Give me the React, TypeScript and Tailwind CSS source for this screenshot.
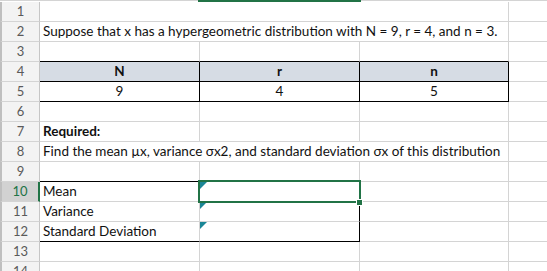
import React from "react";

const R = { g: "border-r border-r-[#d4d4d4]", k: "border-r border-r-black", n: "" };
const B = { g: "border-b border-b-[#d4d4d4]", k: "border-b border-b-black" };

type CellProps = {
  w: string;
  r?: "g" | "k" | "n";
  b?: "g" | "k";
  cls?: string;
  children?: React.ReactNode;
};

function Cell({ w, r = "g", b = "g", cls = "", children }: CellProps) {
  return (
    <div
      className={`relative flex h-full shrink-0 items-end whitespace-nowrap px-[3px] pb-[2px] leading-[16px] ${w} ${R[r]} ${B[b]} ${cls}`}
    >
      {children}
    </div>
  );
}

function Row({ n, active, children }: { n: number; active?: boolean; children: React.ReactNode }) {
  return (
    <div className="flex h-[20px]">
      <div
        className={`flex h-full w-[40px] shrink-0 items-end justify-center border-b border-l-2 border-b-[#d4d4d4] border-l-[#bfbfbf] pb-[2px] text-[13px] leading-[16px] ${
          active
            ? "border-r-2 border-r-[#217346] bg-[#d2d2d2] text-[#217346]"
            : "border-r border-r-[#c6c6c6] bg-[#f3f3f3] text-[#5a5a5a]"
        }`}
      >
        {n}
      </div>
      {children}
    </div>
  );
}

function Flag() {
  return (
    <svg className="absolute left-0 top-0" width="7" height="7" viewBox="0 0 7 7">
      <polygon points="0,0 7,0 0,7" fill="#1b8696" />
    </svg>
  );
}

const A = "w-[160px]";
const Bc = "w-[160px]";
const C = "w-[149px]";
const AC = "w-[469px]";
const D = "flex-1";

export default function App() {
  return (
    <div className="h-[271px] w-[547px] overflow-hidden bg-white text-[13.5px] text-[#111] [font-family:Lato,'Liberation_Sans',sans-serif]">
      <div className="flex h-[2px]">
        <div className="w-[198px] border-t border-t-[#d4d4d4]" />
        <div className="h-[2px] w-[163px] bg-[#217346]" />
        <div className="flex-1 border-t border-t-[#d4d4d4]" />
      </div>

      <Row n={1}>
        <Cell w={AC} />
        <Cell w={D} r="n" />
      </Row>
      <Row n={2}>
        <Cell w={AC}>Suppose that x has a hypergeometric distribution with N = 9, r = 4, and n = 3.</Cell>
        <Cell w={D} r="n" />
      </Row>
      <Row n={3}>
        <Cell w={A} b="k" />
        <Cell w={Bc} b="k" />
        <Cell w={C} b="k" />
        <Cell w={D} r="n" />
      </Row>
      <Row n={4}>
        <Cell w={A} r="k" b="k" cls="justify-center bg-[#d6dce4] font-bold">N</Cell>
        <Cell w={Bc} r="k" b="k" cls="justify-center bg-[#d6dce4] font-bold">r</Cell>
        <Cell w={C} r="k" b="k" cls="justify-center bg-[#d6dce4] font-bold">n</Cell>
        <Cell w={D} r="n" />
      </Row>
      <Row n={5}>
        <Cell w={A} r="k" b="k" cls="justify-center">9</Cell>
        <Cell w={Bc} r="k" b="k" cls="justify-center">4</Cell>
        <Cell w={C} r="k" b="k" cls="justify-center">5</Cell>
        <Cell w={D} r="n" />
      </Row>
      <Row n={6}>
        <Cell w={A} />
        <Cell w={Bc} />
        <Cell w={C} />
        <Cell w={D} r="n" />
      </Row>
      <Row n={7}>
        <Cell w={A} cls="font-bold">Required:</Cell>
        <Cell w={Bc} />
        <Cell w={C} />
        <Cell w={D} r="n" />
      </Row>
      <Row n={8}>
        <Cell w={AC}>Find the mean µx, variance σx2, and standard deviation σx of this distribution</Cell>
        <Cell w={D} r="n" />
      </Row>
      <Row n={9}>
        <Cell w={A} b="k" />
        <Cell w={Bc} b="k" />
        <Cell w={C} />
        <Cell w={D} r="n" />
      </Row>
      <Row n={10} active>
        <Cell w={A}>Mean</Cell>
        <Cell w={Bc} r="k">
          <div className="absolute left-[-2px] top-[-2px] z-10 h-[23px] w-[163px] border-2 border-[#217346]" />
          <div className="absolute left-[156px] top-[17px] z-20 h-[7px] w-[7px] border border-white bg-[#217346]" />
          <Flag />
        </Cell>
        <Cell w={C} />
        <Cell w={D} r="n" />
      </Row>
      <Row n={11}>
        <Cell w={A}>Variance</Cell>
        <Cell w={Bc} r="k">
          <Flag />
        </Cell>
        <Cell w={C} />
        <Cell w={D} r="n" />
      </Row>
      <Row n={12}>
        <Cell w={A} b="k">Standard Deviation</Cell>
        <Cell w={Bc} r="k" b="k">
          <Flag />
        </Cell>
        <Cell w={C} />
        <Cell w={D} r="n" />
      </Row>
      <Row n={13}>
        <Cell w={A} />
        <Cell w={Bc} />
        <Cell w={C} />
        <Cell w={D} r="n" />
      </Row>
      <Row n={14}>
        <Cell w={A} />
        <Cell w={Bc} />
        <Cell w={C} />
        <Cell w={D} r="n" />
      </Row>
    </div>
  );
}
